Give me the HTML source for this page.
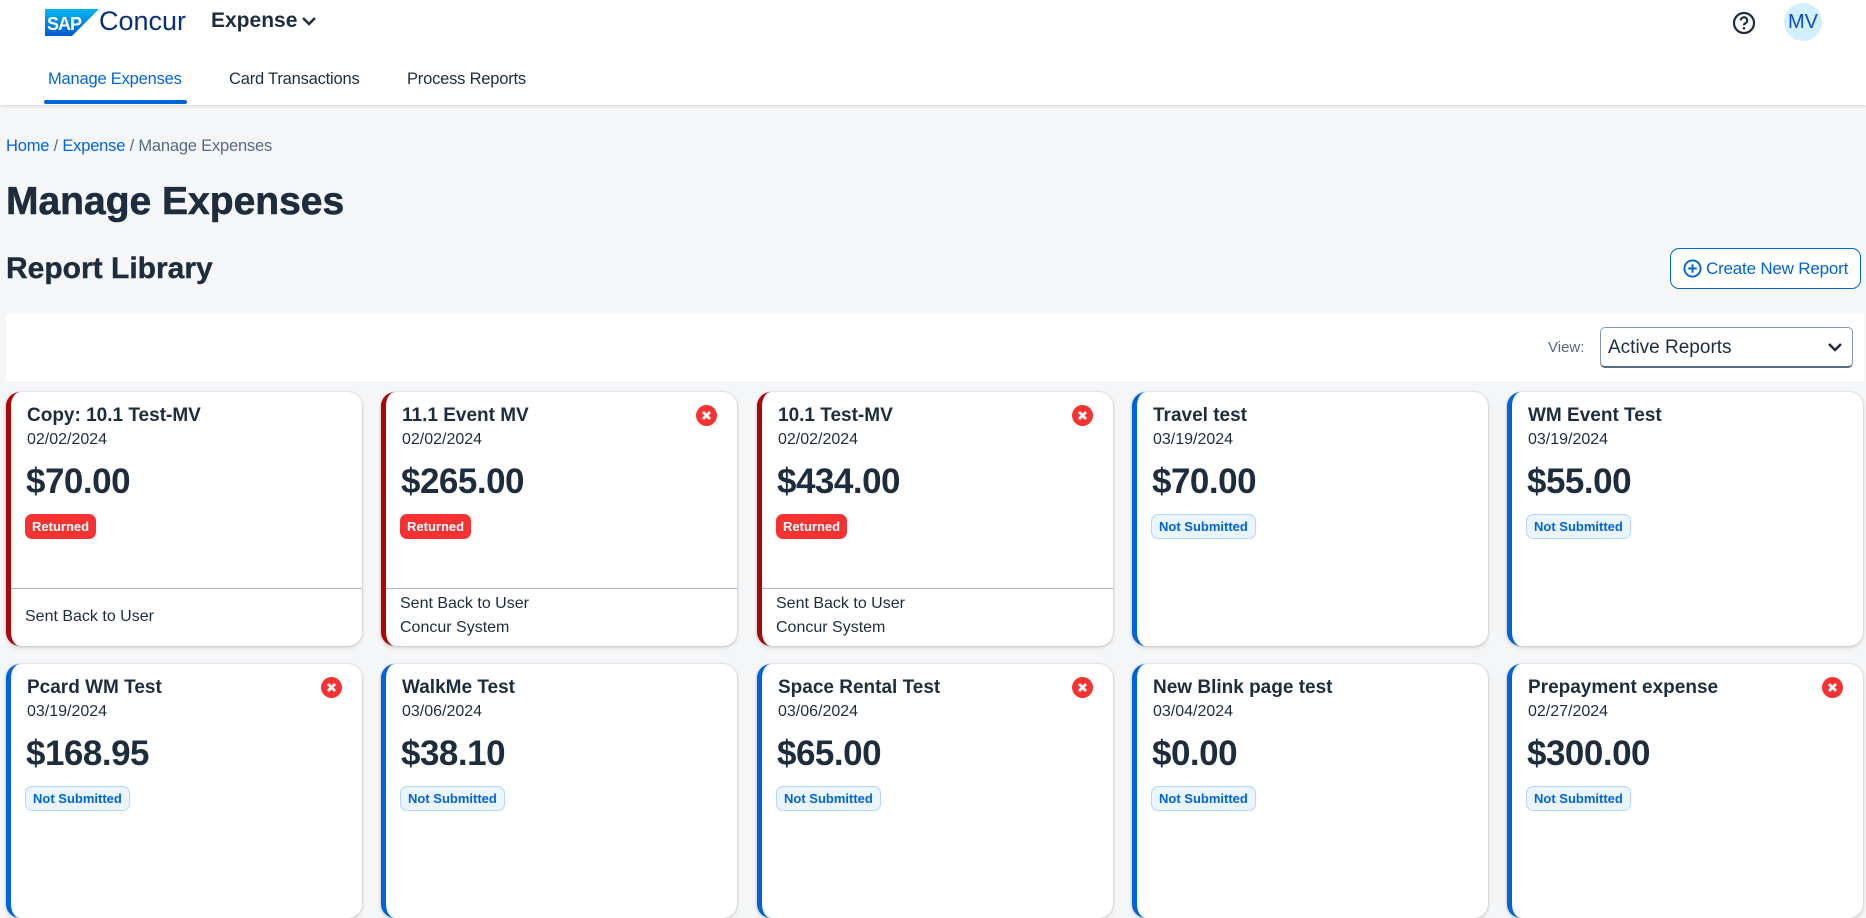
<!DOCTYPE html>
<html><head><meta charset="utf-8"><style>
*{box-sizing:border-box;margin:0;padding:0}
body{width:1866px;height:823px;overflow:hidden;background:#f5f6f7;font-family:"Liberation Sans",Arial,sans-serif;color:#1d2d3e;position:relative}
.hdr{position:absolute;left:0;top:0;width:1866px;height:105px;background:#fff;box-shadow:0 1px 3px rgba(0,0,0,.15)}
.a{position:absolute;white-space:nowrap}
.card{position:absolute;width:356px;height:254px;background:#fff;border-radius:14px;box-shadow:0 0 2px rgba(0,0,0,.2),0 2px 4px rgba(0,0,0,.12);overflow:hidden}
.card.r{border-left:5px solid #aa0808}
.card.b{border-left:5px solid #0064d9}
.t{position:absolute;left:16px;top:13px;font-size:19px;font-weight:bold}
.d{position:absolute;left:16px;top:39px;font-size:16px;color:#1d2d3e}
.m{position:absolute;left:15px;top:70px;font-size:35px;font-weight:bold;letter-spacing:-.5px}
.bd{position:absolute;left:14px;top:122px;height:25px;border-radius:7px;font-size:13px;font-weight:bold;padding:0 7px;line-height:25px}
.ret{background:#f53232;color:#fff}
.ns{background:#ebf5fe;color:#0064d9;border:1px solid #b4d6fb;line-height:23px;font-size:13px}
.dv{position:absolute;left:0;right:0;top:196px;border-top:1px solid #a9b4be}
.f{position:absolute;left:14px;font-size:16px}
.x{position:absolute;right:20px;top:13px;width:21px;height:21px;border-radius:50%;background:#f53232}
</style></head><body>
<div class="hdr"></div>
<svg class="a" style="left:45px;top:9px" width="54" height="27" viewBox="0 0 54 27"><defs><linearGradient id="g" x1="0" y1="0" x2="0" y2="1"><stop offset="0" stop-color="#00b8f1"/><stop offset="1" stop-color="#0057d2"/></linearGradient></defs><polygon points="0,0 54,0 27,27 0,27" fill="url(#g)"/><text x="2" y="21" font-family="Liberation Sans" font-weight="bold" font-size="18" fill="#fff" letter-spacing="-1">SAP</text></svg>
<div class="a" style="left:99px;top:6px;font-size:27px;color:#0a2f7a">Concur</div>
<div class="a" style="left:211px;top:9px;font-size:21px;font-weight:bold;color:#1d2d3e">Expense</div>
<svg class="a" style="left:301px;top:15px" width="16" height="12"><path d="M2 3 L8 9 L14 3" stroke="#1d2d3e" stroke-width="2.5" fill="none"/></svg>
<svg class="a" style="left:1732px;top:11px" width="24" height="24" viewBox="0 0 24 24"><circle cx="12" cy="12" r="10" stroke="#1d2d3e" stroke-width="2.2" fill="none"/><path d="M8.8 9.5a3.2 3.2 0 1 1 4.5 2.9c-.9.4-1.3 1-1.3 2" stroke="#1d2d3e" stroke-width="2.2" fill="none"/><circle cx="12" cy="17.3" r="1.3" fill="#1d2d3e"/></svg>
<div class="a" style="left:1784px;top:3px;width:38px;height:38px;border-radius:50%;background:#d1efff;color:#0a4fb8;font-size:20px;text-align:center;line-height:38px">MV</div>
<div class="a" style="left:48px;top:70px;font-size:16.5px;color:#0064d9;letter-spacing:-.2px">Manage Expenses</div>
<div class="a" style="left:44px;top:100px;width:143px;height:4px;background:#0064d9;border-radius:2px"></div>
<div class="a" style="left:229px;top:70px;font-size:16.5px;letter-spacing:-.2px">Card Transactions</div>
<div class="a" style="left:407px;top:70px;font-size:16.5px;letter-spacing:-.2px">Process Reports</div>
<div class="a" style="left:6px;top:137px;font-size:16.5px;color:#556b82;letter-spacing:-.2px"><span style="color:#0064d9">Home</span> / <span style="color:#0064d9">Expense</span> / Manage Expenses</div>
<div class="a" style="left:6px;top:180px;font-size:39px;font-weight:900;-webkit-text-stroke:.6px #1d2d3e">Manage Expenses</div>
<div class="a" style="left:6px;top:252px;font-size:30px;font-weight:bold;-webkit-text-stroke:.4px #1d2d3e">Report Library</div>
<div class="a" style="left:1670px;top:248px;width:191px;height:41px;border:1px solid #0064d9;border-radius:9px;background:#fff;color:#0064d9;font-size:17px;line-height:39px;padding-left:12px;letter-spacing:-.2px"><svg style="vertical-align:-4px;margin-right:4px" width="19" height="19" viewBox="0 0 20 20"><circle cx="10" cy="10" r="8.5" stroke="#0064d9" stroke-width="2" fill="none"/><path d="M10 5.5v9M5.5 10h9" stroke="#0064d9" stroke-width="2"/></svg>Create New Report</div>
<div class="a" style="left:6px;top:314px;width:1858px;height:67px;background:#fff"></div>
<div class="a" style="left:1548px;top:339px;font-size:15px;color:#556b82">View:</div>
<div class="a" style="left:1600px;top:327px;width:253px;height:41px;border:1px solid #8696a9;border-bottom:2px solid #556b82;border-radius:5px;background:#fff;font-size:19px;line-height:39px;padding-left:7px">Active Reports<svg style="position:absolute;right:9px;top:14px" width="16" height="11"><path d="M2 2 L8 8 L14 2" stroke="#1d2d3e" stroke-width="2.5" fill="none"/></svg></div>

<div class="card r" style="left:6px;top:392px"><div class="t">Copy: 10.1 Test-MV</div><div class="d">02/02/2024</div><div class="m">$70.00</div><div class="bd ret">Returned</div><div class="dv"></div><div class="f" style="top:216px">Sent Back to User</div></div>
<div class="card r" style="left:381px;top:392px"><div class="t">11.1 Event MV</div><div class="d">02/02/2024</div><div class="m">$265.00</div><div class="bd ret">Returned</div><div class="x"><svg width="21" height="21"><path d="M7 7l7 7M14 7l-7 7" stroke="#fff" stroke-width="2.8"/></svg></div><div class="dv"></div><div class="f" style="top:203px">Sent Back to User</div><div class="f" style="top:227px">Concur System</div></div>
<div class="card r" style="left:757px;top:392px"><div class="t">10.1 Test-MV</div><div class="d">02/02/2024</div><div class="m">$434.00</div><div class="bd ret">Returned</div><div class="x"><svg width="21" height="21"><path d="M7 7l7 7M14 7l-7 7" stroke="#fff" stroke-width="2.8"/></svg></div><div class="dv"></div><div class="f" style="top:203px">Sent Back to User</div><div class="f" style="top:227px">Concur System</div></div>
<div class="card b" style="left:1132px;top:392px"><div class="t">Travel test</div><div class="d">03/19/2024</div><div class="m">$70.00</div><div class="bd ns">Not Submitted</div></div>
<div class="card b" style="left:1507px;top:392px"><div class="t">WM Event Test</div><div class="d">03/19/2024</div><div class="m">$55.00</div><div class="bd ns">Not Submitted</div></div>

<div class="card b" style="left:6px;top:664px"><div class="t">Pcard WM Test</div><div class="d">03/19/2024</div><div class="m">$168.95</div><div class="bd ns">Not Submitted</div><div class="x"><svg width="21" height="21"><path d="M7 7l7 7M14 7l-7 7" stroke="#fff" stroke-width="2.8"/></svg></div></div>
<div class="card b" style="left:381px;top:664px"><div class="t">WalkMe Test</div><div class="d">03/06/2024</div><div class="m">$38.10</div><div class="bd ns">Not Submitted</div></div>
<div class="card b" style="left:757px;top:664px"><div class="t">Space Rental Test</div><div class="d">03/06/2024</div><div class="m">$65.00</div><div class="bd ns">Not Submitted</div><div class="x"><svg width="21" height="21"><path d="M7 7l7 7M14 7l-7 7" stroke="#fff" stroke-width="2.8"/></svg></div></div>
<div class="card b" style="left:1132px;top:664px"><div class="t">New Blink page test</div><div class="d">03/04/2024</div><div class="m">$0.00</div><div class="bd ns">Not Submitted</div></div>
<div class="card b" style="left:1507px;top:664px"><div class="t">Prepayment expense</div><div class="d">02/27/2024</div><div class="m">$300.00</div><div class="bd ns">Not Submitted</div><div class="x"><svg width="21" height="21"><path d="M7 7l7 7M14 7l-7 7" stroke="#fff" stroke-width="2.8"/></svg></div></div>
</body></html>
